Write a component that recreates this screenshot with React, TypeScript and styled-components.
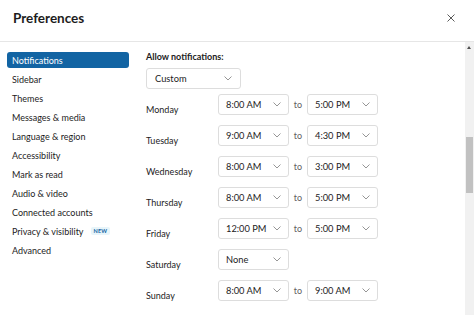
import React from "react";
import styled, { createGlobalStyle } from "styled-components";

const GlobalStyle = createGlobalStyle`
  html, body {
    margin: 0;
    padding: 0;
    background: #fff;
    overflow: hidden;
  }
  body {
    font-family: Lato, "Noto Sans", sans-serif;
    color: #1d1c1d;
  }
`;

const Dialog = styled.div`
  width: 474px;
  height: 315px;
  display: flex;
  flex-direction: column;
  background: #fff;
  overflow: hidden;
`;

const Header = styled.div`
  height: 42px;
  flex-shrink: 0;
  box-sizing: border-box;
  display: flex;
  align-items: center;
  justify-content: space-between;
  padding: 0 18px 5px 13px;
  border-bottom: 1px solid #e6e6e6;
`;

const Title = styled.h1`
  margin: 0;
  font-size: 13.5px;
  font-weight: 700;
  color: #1d1c1d;
`;

const CloseButton = styled.button`
  border: none;
  background: none;
  padding: 0;
  width: 10px;
  height: 10px;
  display: flex;
  align-items: center;
  justify-content: center;
  cursor: pointer;
`;

const Body = styled.div`
  flex: 1;
  display: flex;
  min-height: 0;
`;

const Sidebar = styled.ul`
  list-style: none;
  margin: 0;
  width: 136px;
  box-sizing: border-box;
  padding: 10px 7px 0;
  display: flex;
  flex-direction: column;
  gap: 3px;
`;

const NavItem = styled.li<{ $active?: boolean }>`
  height: 16px;
  display: flex;
  align-items: center;
  gap: 7px;
  padding-left: 5px;
  border-radius: 3px;
  font-size: 9px;
  color: ${(p) => (p.$active ? "#fff" : "#1d1c1d")};
  background: ${(p) => (p.$active ? "#1264a3" : "transparent")};
`;

const Badge = styled.span`
  font-size: 5.5px;
  font-weight: 700;
  color: #1264a3;
  background: #e8f5fa;
  padding: 1px 3px;
  border-radius: 2px;
  letter-spacing: 0.2px;
`;

const Main = styled.div`
  flex: 1;
  padding: 9px 0 0 10px;
  display: flex;
  flex-direction: column;
`;

const SectionLabel = styled.div`
  font-size: 9px;
  font-weight: 700;
  line-height: 12px;
  margin-bottom: 5px;
`;

const Select = styled.div<{ $width: number; $pad: number }>`
  width: ${(p) => p.$width}px;
  height: 21px;
  box-sizing: border-box;
  border: 1px solid #dddddd;
  border-radius: 3px;
  display: flex;
  align-items: center;
  justify-content: space-between;
  padding: 0 ${(p) => p.$pad}px 0 ${(p) => p.$pad}px;
  font-size: 9.3px;
  color: #1d1c1d;
  background: #fff;
`;

const Schedule = styled.div`
  margin-top: 5px;
  display: flex;
  flex-direction: column;
  gap: 10px;
`;

const DayRow = styled.div`
  display: flex;
  align-items: flex-end;
  height: 21px;
`;

const DayLabel = styled.div`
  width: 72px;
  font-size: 9px;
  line-height: 12px;
  margin-bottom: -1px;
`;

const To = styled.span`
  width: 18px;
  text-align: center;
  font-size: 9px;
  color: #616061;
  align-self: center;
`;

const Scrollbar = styled.div`
  width: 9px;
  background: #f1f1f1;
  position: relative;
  flex-shrink: 0;
`;

const ScrollArrow = styled.div`
  position: absolute;
  top: 4px;
  left: 2px;
  width: 0;
  height: 0;
  border-left: 2.5px solid transparent;
  border-right: 2.5px solid transparent;
  border-bottom: 3px solid #505050;
`;

const ScrollThumb = styled.div`
  position: absolute;
  top: 95px;
  left: 1px;
  width: 7px;
  height: 56px;
  background: #c1c1c1;
`;

const Chevron = () => (
  <svg width="8" height="5" viewBox="0 0 8 5" fill="none">
    <path d="M0.5 0.5 L4 4 L7.5 0.5" stroke="#8a8a8a" strokeWidth="0.9" />
  </svg>
);

const nav = [
  "Notifications",
  "Sidebar",
  "Themes",
  "Messages & media",
  "Language & region",
  "Accessibility",
  "Mark as read",
  "Audio & video",
  "Connected accounts",
  "Privacy & visibility",
  "Advanced",
];

const days: { day: string; from: string; to?: string }[] = [
  { day: "Monday", from: "8:00 AM", to: "5:00 PM" },
  { day: "Tuesday", from: "9:00 AM", to: "4:30 PM" },
  { day: "Wednesday", from: "8:00 AM", to: "3:00 PM" },
  { day: "Thursday", from: "8:00 AM", to: "5:00 PM" },
  { day: "Friday", from: "12:00 PM", to: "5:00 PM" },
  { day: "Saturday", from: "None" },
  { day: "Sunday", from: "8:00 AM", to: "9:00 AM" },
];

function App() {
  return (
    <Dialog>
      <GlobalStyle />
      <Header>
        <Title>Preferences</Title>
        <CloseButton aria-label="Close">
          <svg width="8" height="8" viewBox="0 0 8 8">
            <path d="M0.5 0.5 L7.5 7.5 M7.5 0.5 L0.5 7.5" stroke="#5a5a5a" strokeWidth="1" />
          </svg>
        </CloseButton>
      </Header>
      <Body>
        <Sidebar>
          {nav.map((item, i) => (
            <NavItem key={item} $active={i === 0}>
              {item}
              {item === "Privacy & visibility" && <Badge>NEW</Badge>}
            </NavItem>
          ))}
        </Sidebar>
        <Main>
          <SectionLabel>Allow notifications:</SectionLabel>
          <Select $width={95} $pad={8}>
            Custom
            <Chevron />
          </Select>
          <Schedule>
            {days.map((d) => (
              <DayRow key={d.day}>
                <DayLabel>{d.day}</DayLabel>
                <Select $width={71} $pad={7}>
                  {d.from}
                  <Chevron />
                </Select>
                {d.to && (
                  <>
                    <To>to</To>
                    <Select $width={71} $pad={7}>
                      {d.to}
                      <Chevron />
                    </Select>
                  </>
                )}
              </DayRow>
            ))}
          </Schedule>
        </Main>
        <Scrollbar>
          <ScrollArrow />
          <ScrollThumb />
        </Scrollbar>
      </Body>
    </Dialog>
  );
}

export default App;
